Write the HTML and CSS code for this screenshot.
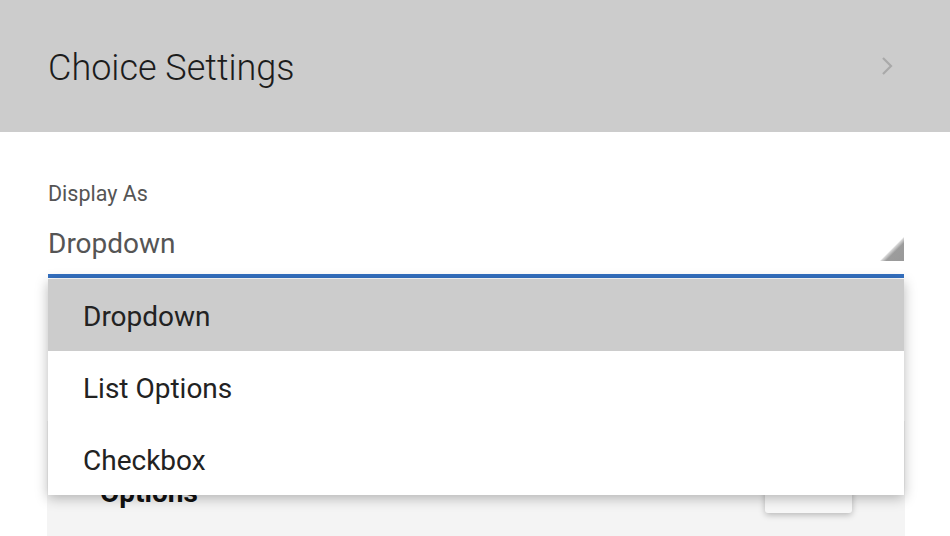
FILE: index.html
```html
<!DOCTYPE html>
<html>
<head>
<meta charset="utf-8">
<link rel="stylesheet" href="styles.css">
</head>
<body>
<header class="header">
  <h1 class="title">Choice Settings</h1>
  <svg class="chevron" width="12" height="18" viewBox="0 0 12 18"><path d="M2 1 L10 9 L2 17" fill="none" stroke="#a9a9a9" stroke-width="2.2"/></svg>
</header>
<main class="content">
  <div class="field">
    <div class="label">Display As</div>
    <div class="value-row">
      <span class="value">Dropdown</span>
      <svg class="caret" width="24" height="24" viewBox="0 0 24 24">
        <defs>
          <linearGradient id="g" x1="0" y1="0" x2="1" y2="1">
            <stop offset="0.45" stop-color="#ffffff"/>
            <stop offset="0.62" stop-color="#9c9c9c"/>
            <stop offset="1" stop-color="#999999"/>
          </linearGradient>
        </defs>
        <polygon points="24,0 24,24 0,24" fill="url(#g)"/>
      </svg>
    </div>
    <div class="underline"></div>
    <ul class="menu">
      <li class="item selected">Dropdown</li>
      <li class="item">List Options</li>
      <li class="item">Checkbox</li>
    </ul>
  </div>
  <section class="panel">
    <div class="panel-head">
      <h2 class="panel-title">Options</h2>
      <button class="add-btn"></button>
    </div>
  </section>
</main>
</body>
</html>
```
FILE: styles.css
```css
html, body {
  margin: 0;
  padding: 0;
  background: #ffffff;
  font-family: Roboto, "Liberation Sans", sans-serif;
  overflow: hidden;
}
.header {
  height: 132px;
  background: #cccccc;
  display: flex;
  align-items: center;
  justify-content: space-between;
  padding: 3px 57px 0 48px;
  box-sizing: border-box;
}
.title {
  margin: 0;
  font-size: 36px;
  font-weight: 300;
  color: #1c1c1c;
  line-height: 40px;
}
.chevron {
  display: block;
  margin-top: -3px;
}
.content {
  padding: 0 46px 0 48px;
}
.field {
  position: relative;
  padding-top: 48px;
}
.label {
  font-size: 21.5px;
  color: #555555;
  line-height: 28px;
}
.value-row {
  display: flex;
  justify-content: space-between;
  align-items: flex-end;
  height: 66px;
}
.value {
  font-size: 28px;
  color: #555555;
  line-height: 32px;
  margin-bottom: 14px;
}
.caret {
  display: block;
  margin-bottom: 13px;
}
.underline {
  height: 4px;
  background: #3470c0;
}
.menu {
  position: absolute;
  left: 0;
  right: 0;
  top: 147px;
  margin: 0;
  padding: 0;
  list-style: none;
  background: #ffffff;
  box-shadow: 0 3px 12px rgba(0, 0, 0, 0.28);
  z-index: 2;
}
.item {
  height: 72px;
  line-height: 76px;
  padding-left: 35px;
  font-size: 28px;
  color: #222222;
}
.item.selected {
  background: #cccccc;
}
.panel {
  margin: 143px -1px 0 -1px;
  background: #f4f4f4;
  height: 200px;
}
.panel-head {
  display: flex;
  justify-content: space-between;
  align-items: flex-start;
  padding: 52px 53px 0 53px;
}
.panel-title {
  margin: 4px 0 0 0;
  font-size: 28px;
  font-weight: 700;
  color: #111111;
  line-height: 32px;
}
.add-btn {
  width: 87px;
  height: 40px;
  border: none;
  border-radius: 3px;
  background: #f7f7f7;
  box-shadow: 0 2px 6px rgba(0, 0, 0, 0.25);
}
```
